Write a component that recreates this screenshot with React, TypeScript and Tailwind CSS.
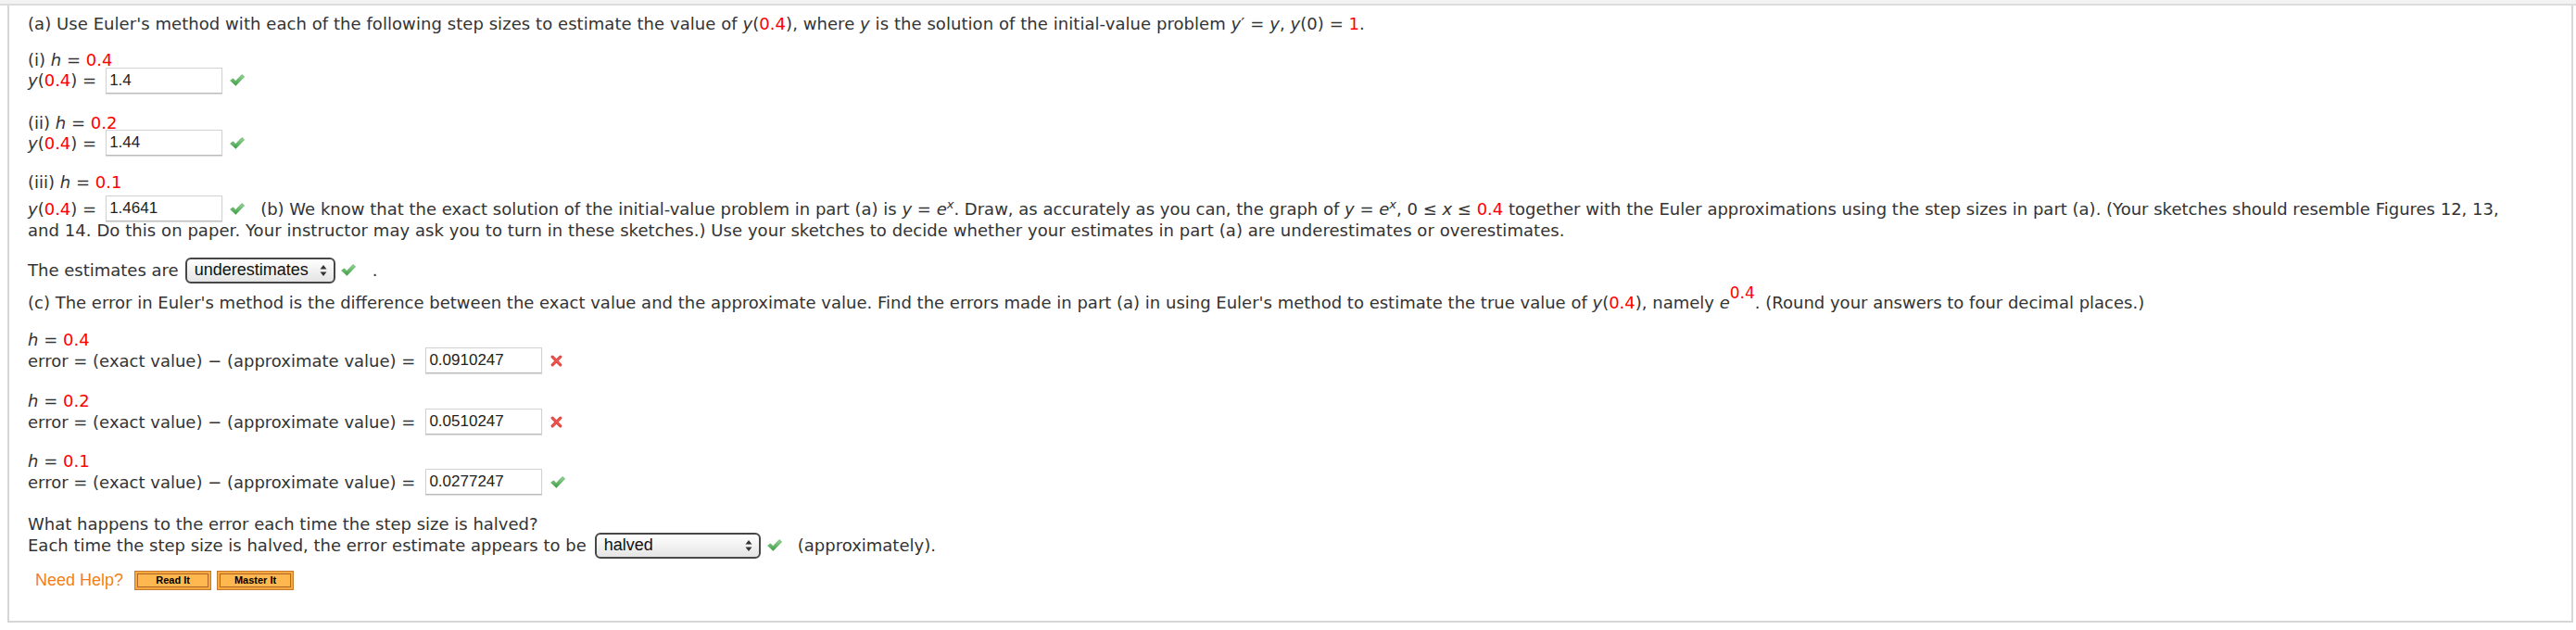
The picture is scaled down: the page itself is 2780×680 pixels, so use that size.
import React from "react";

function R({ children }: { children: React.ReactNode }) {
  return <span className="text-[#ff0000]">{children}</span>;
}

function V({ children }: { children: React.ReactNode }) {
  return <i className="italic">{children}</i>;
}

function Answer({ value, className }: { value: string; className: string }) {
  return (
    <input
      readOnly
      value={value}
      className={`h-[28px] shrink-0 border border-[#d2d2d2] border-b-[#b9b9b9] bg-white pl-[3px] font-['Liberation_Sans',sans-serif] text-[17px] text-[#222] shadow-[0_1px_1px_rgba(0,0,0,0.12)] outline-none ${className}`}
    />
  );
}

function Check({ className }: { className: string }) {
  return (
    <svg width="16" height="13" viewBox="0 0 16 13" className={`shrink-0 ${className}`}>
      <defs>
        <linearGradient id="chk" x1="0" y1="0" x2="0" y2="1">
          <stop offset="0" stopColor="#9bd89b" />
          <stop offset="1" stopColor="#3b9c43" />
        </linearGradient>
      </defs>
      <path d="M0.6 7 L3.5 4.8 L6.2 7.6 L13 0.6 L15.6 2.8 L6.4 12.4 Z" fill="url(#chk)" stroke="#47a34c" strokeWidth="0.6" />
    </svg>
  );
}

function Cross({ className }: { className: string }) {
  return (
    <svg width="13" height="13" viewBox="0 0 13 13" className={`shrink-0 ${className}`}>
      <path d="M2.2 2.2 L10.8 10.8 M10.8 2.2 L2.2 10.8" stroke="#e5453f" strokeWidth="3.2" strokeLinecap="round" />
      <path d="M2.6 2.2 L10.6 10.2 M10.4 2.6 L2.6 10.4" stroke="#f27a72" strokeWidth="1" strokeLinecap="round" opacity="0.6" />
    </svg>
  );
}

function Arrows() {
  return (
    <svg width="8" height="14" viewBox="0 0 8 14" className="shrink-0">
      <polygon points="4,1 7.5,5.6 0.5,5.6" fill="#333" />
      <polygon points="0.5,8.4 7.5,8.4 4,13" fill="#333" />
    </svg>
  );
}

function Picker({ value, className }: { value: string; className: string }) {
  return (
    <div
      className={`flex h-[28px] shrink-0 items-center justify-between rounded-[6px] border-2 border-[#474747] bg-gradient-to-b from-white to-[#e4e4e4] pl-[8px] pr-[7px] font-['Liberation_Sans',sans-serif] text-[18px] text-[#111] ${className}`}
    >
      <span>{value}</span>
      <Arrows />
    </div>
  );
}

function HelpButton({ label, className }: { label: string; className: string }) {
  return (
    <div className={`h-[21px] w-[83px] border border-[#c47a30] bg-[#f7a93e] p-[2px] ${className}`}>
      <div className="flex h-full items-center justify-center border border-[#b0662a] bg-[#ffb84f] font-['Liberation_Sans',sans-serif] text-[11px] font-bold text-black">
        {label}
      </div>
    </div>
  );
}

export default function App() {
  const row = "flex h-[22px] items-center whitespace-nowrap";

  return (
    <div className="min-h-[680px] bg-white font-['DejaVu_Sans',sans-serif] text-[18px] text-[#333]">
      <div className="h-[6px] border-b-2 border-[#dcdcdc] bg-[#f3f3f3]" />
      <div className="ml-[8px] mr-[3px] border-x-2 border-b-2 border-[#d6d6d6] pb-[32px] pl-[20px] pt-[8px]">
        <div className={row}>
          <span className="tracking-[0.06px]">
            (a) Use Euler's method with each of the following step sizes to estimate the value of <V>y</V>(<R>0.4</R>), where <V>y</V> is the solution of the initial-value problem <V>y</V>′ = <V>y</V>, <V>y</V>(0) = <R>1</R>.
          </span>
        </div>

        <div className={`${row} mt-[17.5px]`}>
          <span>
            (i) <V>h</V> = <R>0.4</R>
          </span>
        </div>
        <div className={row}>
          <span>
            <V>y</V>(<R>0.4</R>) =
          </span>
          <Answer value="1.4" className="ml-[10px] w-[126px]" />
          <Check className="ml-[8px]" />
        </div>

        <div className={`${row} mt-[23.5px]`}>
          <span>
            (ii) <V>h</V> = <R>0.2</R>
          </span>
        </div>
        <div className={row}>
          <span>
            <V>y</V>(<R>0.4</R>) =
          </span>
          <Answer value="1.44" className="ml-[10px] w-[126px]" />
          <Check className="ml-[8px]" />
        </div>

        <div className={`${row} mt-[20px]`}>
          <span>
            (iii) <V>h</V> = <R>0.1</R>
          </span>
        </div>
        <div className={`${row} mt-[7px]`}>
          <span>
            <V>y</V>(<R>0.4</R>) =
          </span>
          <Answer value="1.4641" className="ml-[10px] w-[126px]" />
          <Check className="ml-[8px]" />
          <span className="ml-[17px]">
            (b) We know that the exact solution of the initial-value problem in part (a) is <V>y</V> = <V>e</V>
            <sup className="text-[13px]">
              <V>x</V>
            </sup>
            . Draw, as accurately as you can, the graph of <V>y</V> = <V>e</V>
            <sup className="text-[13px]">
              <V>x</V>
            </sup>
            , 0 ≤ <V>x</V> ≤ <R>0.4</R> together with the Euler approximations using the step sizes in part (a). (Your sketches should resemble Figures 12, 13,
          </span>
        </div>
        <div className={`${row} mt-[1px]`}>
          <span className="tracking-[0.06px]">
            and 14. Do this on paper. Your instructor may ask you to turn in these sketches.) Use your sketches to decide whether your estimates in part (a) are underestimates or overestimates.
          </span>
        </div>

        <div className={`${row} mt-[21.5px]`}>
          <span>The estimates are</span>
          <Picker value="underestimates" className="ml-[7px] w-[162px]" />
          <Check className="ml-[6px]" />
          <span className="ml-[18px]">.</span>
        </div>

        <div className={`${row} mt-[13px]`}>
          <span>
            (c) The error in Euler's method is the difference between the exact value and the approximate value. Find the errors made in part (a) in using Euler's method to estimate the true value of <V>y</V>(<R>0.4</R>), namely <V>e</V>
            <sup className="top-[-0.65em] text-[17px]">
              <R>0.4</R>
            </sup>
            . (Round your answers to four decimal places.)
          </span>
        </div>

        <div className={`${row} mt-[17.5px]`}>
          <span>
            <V>h</V> = <R>0.4</R>
          </span>
        </div>
        <div className={`${row} mt-px`}>
          <span>error = (exact value) − (approximate value) =</span>
          <Answer value="0.0910247" className="ml-[11px] w-[126px]" />
          <Cross className="ml-[9px]" />
        </div>

        <div className={`${row} mt-[21px]`}>
          <span>
            <V>h</V> = <R>0.2</R>
          </span>
        </div>
        <div className={`${row} mt-px`}>
          <span>error = (exact value) − (approximate value) =</span>
          <Answer value="0.0510247" className="ml-[11px] w-[126px]" />
          <Cross className="ml-[9px]" />
        </div>

        <div className={`${row} mt-[20px]`}>
          <span>
            <V>h</V> = <R>0.1</R>
          </span>
        </div>
        <div className={`${row} mt-px`}>
          <span>error = (exact value) − (approximate value) =</span>
          <Answer value="0.0277247" className="ml-[11px] w-[126px]" />
          <Check className="ml-[9px]" />
        </div>

        <div className={`${row} mt-[23px]`}>
          <span>What happens to the error each time the step size is halved?</span>
        </div>
        <div className={`${row} mt-[1.5px]`}>
          <span>Each time the step size is halved, the error estimate appears to be</span>
          <Picker value="halved" className="ml-[9px] w-[179px]" />
          <Check className="ml-[7px]" />
          <span className="ml-[17px]">(approximately).</span>
        </div>

        <div className={`${row} mt-[16px] pl-[8px]`}>
          <span className="font-['Liberation_Sans',sans-serif] text-[18px] text-[#ef7f1d]">Need Help?</span>
          <HelpButton label="Read It" className="ml-[12px]" />
          <HelpButton label="Master It" className="ml-[6px]" />
        </div>
      </div>
    </div>
  );
}
